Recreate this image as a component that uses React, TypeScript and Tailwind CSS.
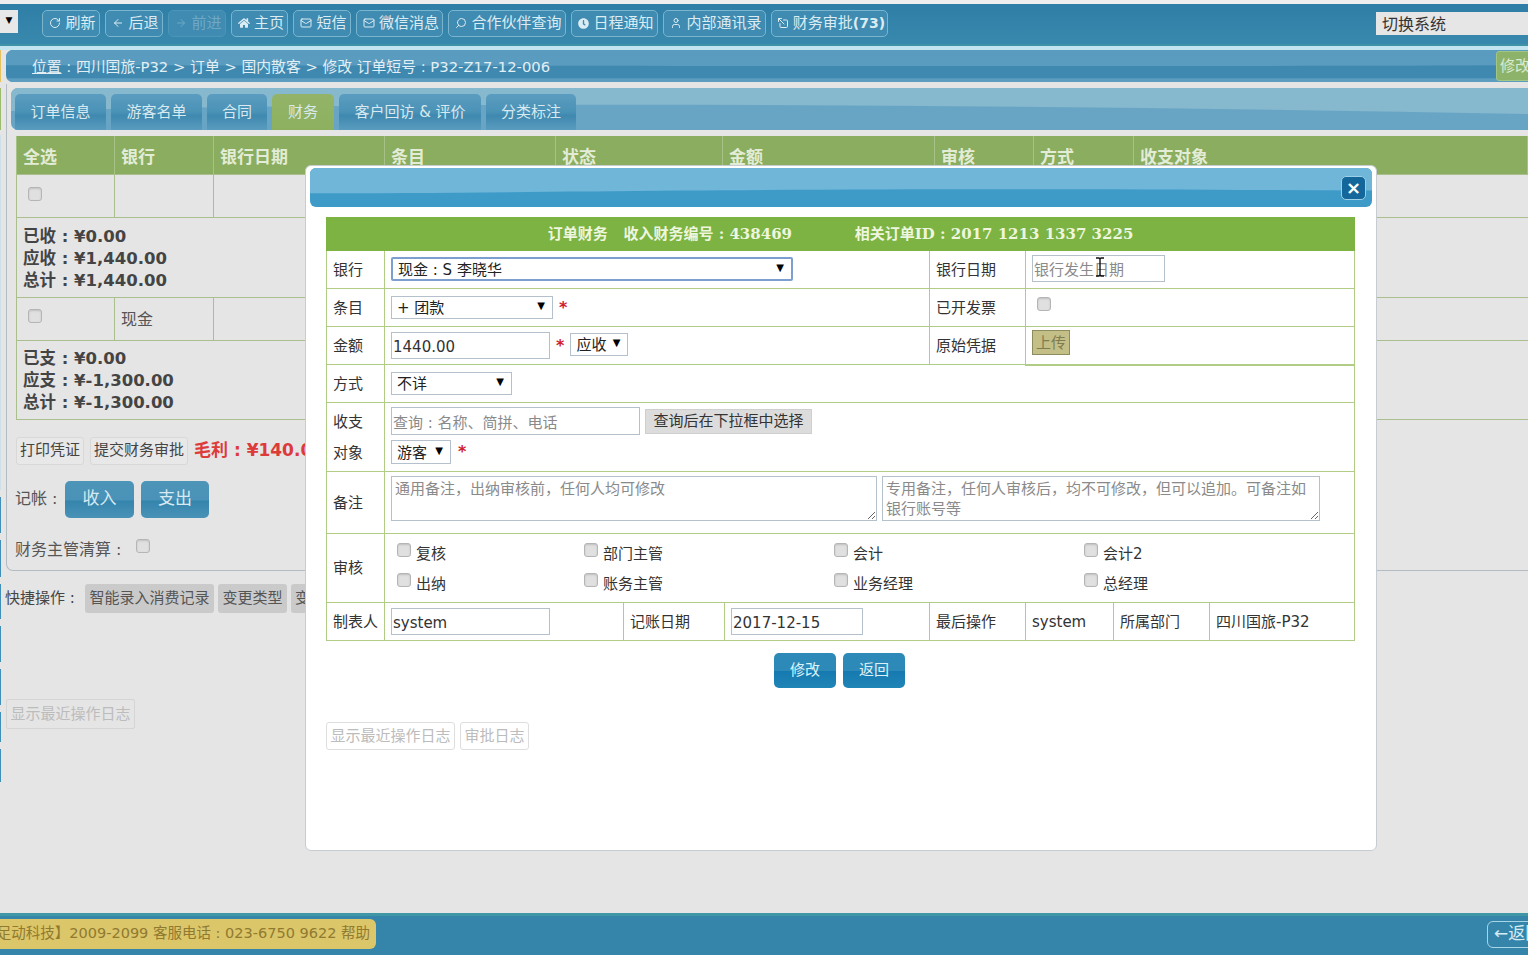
import type { ReactNode } from "react";
import { ArrowLeft, ArrowRight, Mail, RotateCw, Search, User, ExternalLink } from "lucide-react";
import { FaClock, FaHome } from "react-icons/fa";

const sans = "[font-family:'DejaVu_Sans','Noto_Sans_CJK_SC',sans-serif]";

const topButtons = [
  { label: "刷新", w: "w-[58px]", icon: <RotateCw size={12} /> },
  { label: "后退", w: "w-[58px]", icon: <ArrowLeft size={12} /> },
  { label: "前进", w: "w-[58px]", icon: <ArrowRight size={12} />, off: true },
  { label: "主页", w: "w-[57px]", icon: <FaHome size={12} /> },
  { label: "短信", w: "w-[58px]", icon: <Mail size={12} /> },
  { label: "微信消息", w: "w-[87px]", icon: <Mail size={12} /> },
  { label: "合作伙伴查询", w: "w-[118px]", icon: <Search size={12} className="-scale-x-100" /> },
  { label: "日程通知", w: "w-[87px]", icon: <FaClock size={11} /> },
  { label: "内部通讯录", w: "w-[103px]", icon: <User size={12} /> },
  { label: "财务审批", count: "(73)", w: "w-[117px]", icon: <ExternalLink size={12} className="-scale-x-100" /> },
];

const tabs = [
  { label: "订单信息", w: "w-[91px]" },
  { label: "游客名单", w: "w-[91px]" },
  { label: "合同", w: "w-[60px]" },
  { label: "财务", w: "w-[62px]", on: true },
  { label: "客户回访 & 评价", w: "w-[142px]" },
  { label: "分类标注", w: "w-[90px]" },
];

const backCols = [98, 99, 171, 171, 167, 212, 99, 100, 394];
const backHead = ["全选", "银行", "银行日期", "条目", "状态", "金额", "审核", "方式", "收支对象"];

function Wave({ fill, d }: { fill: string; d: string }) {
  return (
    <svg viewBox="0 0 1000 100" preserveAspectRatio="none" className="absolute inset-0 h-full w-full">
      <path d={d} fill={fill} />
    </svg>
  );
}

function Check({ className = "" }: { className?: string }) {
  return (
    <input
      type="checkbox"
      readOnly
      className={`h-[14px] w-[14px] appearance-none rounded-[3px] border border-[#b5b5b5] bg-[#e0e0e0] shadow-[inset_0_1px_2px_#c0c0c0] ${className}`}
    />
  );
}

function Sel({ text, className, focus }: { text: string; className: string; focus?: boolean }) {
  return (
    <div
      className={`flex items-center justify-between pl-[5px] pr-[7px] text-[15px] text-[#222] ${
        focus ? "rounded-[2px] border-2 border-[#7d9fd0]" : "border border-[#b4c0cc]"
      } ${className}`}
    >
      <span className="translate-y-[1px]">{text}</span>
      <span className="-mt-[4px] text-[10px] text-black">▼</span>
    </div>
  );
}

function Text({ className, value, placeholder }: { className: string; value?: string; placeholder?: string }) {
  return (
    <input
      readOnly
      value={value}
      placeholder={placeholder}
      className={`border border-[#b4c0cc] px-[1px] pt-[3px] text-[15px] text-[#333] outline-none placeholder:text-[#8a8a8a] ${className}`}
    />
  );
}

function Star() {
  return <span className="text-[16px] font-bold text-[#d0202c]">*</span>;
}

function Lb({ children, colSpan }: { children: ReactNode; colSpan?: number }) {
  return (
    <td colSpan={colSpan} className="border border-[#b0cc85] pl-[6px] pt-[1px] text-[15px] text-[#333]">
      {children}
    </td>
  );
}

function Cell({ children, colSpan, className = "" }: { children?: ReactNode; colSpan?: number; className?: string }) {
  return (
    <td colSpan={colSpan} className={`border border-[#b0cc85] pl-[6px] ${className}`}>
      <div className="flex items-center">{children}</div>
    </td>
  );
}

function Audit({ label }: { label: string }) {
  return (
    <label className="flex items-center gap-[5px] text-[15px] text-[#333]">
      <Check className="-mt-[6px]" />
      <span className="translate-y-[1px]">{label}</span>
    </label>
  );
}

function Modal() {
  return (
    <div className={`absolute left-[305px] top-[165px] h-[686px] w-[1072px] rounded-[6px] border border-[#c5ccd2] bg-white px-[4px] pt-[2px] ${sans}`}>
      <div className="relative flex h-[39px] items-center justify-end overflow-hidden rounded-[6px] bg-[#3e9bc8] pr-[6px]">
        <Wave fill="#70b6d9" d="M0 0H1000V58C800 55 600 52 350 58C200 62 100 65 0 65Z" />
        <button className="relative flex h-[24px] w-[25px] items-center justify-center rounded-[5px] border border-[#9cd0e6] bg-[#14679a] text-[18px] font-bold leading-none text-white">
          ×
        </button>
      </div>

      <table className="ml-[16px] mt-[10px] w-[1028px] table-fixed border-collapse">
        <colgroup>
          {[58, 239, 101, 205, 96, 88, 96, 145].map((w, i) => (
            <col key={i} style={{ width: w }} />
          ))}
        </colgroup>
        <tbody>
          <tr className="h-[33px]">
            <td colSpan={8} className="border border-[#7cb342] bg-[#7cb342] text-center [font-family:'DejaVu_Serif','Noto_Sans_CJK_SC',serif] text-[15px] font-bold text-[#eef6df]">
              订单财务&nbsp;&nbsp;&nbsp;收入财务编号 : 438469&nbsp;&nbsp;&nbsp;&nbsp;&nbsp;&nbsp;&nbsp;&nbsp;&nbsp;&nbsp;&nbsp;&nbsp;相关订单ID : 2017 1213 1337 3225
            </td>
          </tr>
          <tr className="h-[38px]">
            <Lb>银行</Lb>
            <Cell colSpan={3}>
              <Sel text="现金 : S 李晓华" focus className="-mt-[1px] h-[24px] w-[402px]" />
            </Cell>
            <Lb>银行日期</Lb>
            <Cell colSpan={3}>
              <Text placeholder="银行发生日期" className="-mt-[2px] h-[27px] w-[133px]" />
            </Cell>
          </tr>
          <tr className="h-[38px]">
            <Lb>条目</Lb>
            <Cell colSpan={3}>
              <Sel text="+ 团款" className="-mt-[1px] h-[23px] w-[162px]" />
              <span className="ml-[6px]">
                <Star />
              </span>
            </Cell>
            <Lb>已开发票</Lb>
            <Cell colSpan={3}>
              <Check className="-mt-[7px] ml-[5px]" />
            </Cell>
          </tr>
          <tr className="h-[38px]">
            <Lb>金额</Lb>
            <Cell colSpan={3}>
              <Text value="1440.00" className="-mt-[1px] h-[27px] w-[159px]" />
              <span className="ml-[6px]">
                <Star />
              </span>
              <Sel text="应收" className="ml-[6px] h-[23px] w-[58px] -translate-y-[1px]" />
            </Cell>
            <Lb>原始凭据</Lb>
            <Cell colSpan={3} className="border-b-2">
              <button className="-mt-[5px] h-[25px] w-[38px] border border-[#8d8c5e] bg-[#c4bf87] text-[15px] text-[#7f7c50]">上传</button>
            </Cell>
          </tr>
          <tr className="h-[38px]">
            <Lb>方式</Lb>
            <Cell colSpan={7}>
              <Sel text="不详" className="-mt-[1px] h-[23px] w-[121px]" />
            </Cell>
          </tr>
          <tr className="h-[69px]">
            <td className="border border-[#b0cc85] pl-[6px] pt-[1px] text-[15px] leading-[31px] text-[#333]">
              收支
              <br />
              对象
            </td>
            <td colSpan={7} className="border border-[#b0cc85] pl-[6px]">
              <div className="flex -translate-y-[2px] items-center gap-[5px]">
                <Text placeholder="查询 : 名称、简拼、电话" className="h-[28px] w-[249px]" />
                <button className="h-[25px] w-[167px] border border-[#cfcfcf] bg-[#dcdcdc] text-[15px] text-[#333]">查询后在下拉框中选择</button>
              </div>
              <div className="mt-[4px] flex -translate-y-[1px] items-center gap-[6px]">
                <Sel text="游客" className="h-[24px] w-[60px]" />
                <span className="ml-[1px]">
                  <Star />
                </span>
              </div>
            </td>
          </tr>
          <tr className="h-[62px]">
            <Lb>备注</Lb>
            <td colSpan={7} className="border border-[#b0cc85] pl-[6px]">
              <div className="flex gap-[5px] pb-[8px]">
                <textarea
                  readOnly
                  placeholder="通用备注，出纳审核前，任何人均可修改"
                  className="h-[45px] w-[486px] border border-[#b4c0cc] px-[3px] py-[2px] text-[15px] leading-[20px] outline-none placeholder:text-[#8a8a8a]"
                />
                <textarea
                  readOnly
                  placeholder="专用备注，任何人审核后，均不可修改，但可以追加。可备注如银行账号等"
                  className="h-[45px] w-[438px] border border-[#b4c0cc] px-[3px] py-[2px] text-[15px] leading-[20px] outline-none placeholder:text-[#8a8a8a]"
                />
              </div>
            </td>
          </tr>
          <tr className="h-[69px]">
            <Lb>审核</Lb>
            <td colSpan={7} className="border border-[#b0cc85] pl-[12px]">
              <div className="grid grid-cols-[187px_250px_250px_1fr] gap-y-[8px]">
                {["复核", "部门主管", "会计", "会计2", "出纳", "账务主管", "业务经理", "总经理"].map((t) => (
                  <Audit key={t} label={t} />
                ))}
              </div>
            </td>
          </tr>
          <tr className="h-[38px]">
            <Lb>制表人</Lb>
            <Cell>
              <Text value="system" className="-mt-[1px] h-[27px] w-[159px]" />
            </Cell>
            <Lb>记账日期</Lb>
            <Cell>
              <Text value="2017-12-15" className="-mt-[1px] h-[27px] w-[132px]" />
            </Cell>
            <Lb>最后操作</Lb>
            <Lb>system</Lb>
            <Lb>所属部门</Lb>
            <Lb>四川国旅-P32</Lb>
          </tr>
        </tbody>
      </table>

      <div className="ml-[464px] mt-[12px] flex gap-[7px]">
        {["修改", "返回"].map((t) => (
          <button
            key={t}
            className="h-[35px] w-[62px] rounded-[5px] bg-[linear-gradient(#2d8ab8_0%,#2d8ab8_50%,#167ab0_52%,#1f84b6_100%)] text-[15px] text-[#dff1f8]"
          >
            {t}
          </button>
        ))}
      </div>

      <div className="ml-[16px] mt-[34px] flex gap-[5px]">
        <button className="h-[28px] w-[129px] rounded-[3px] border border-[#dedede] text-[15px] text-[#bcbcbc]">显示最近操作日志</button>
        <button className="h-[28px] w-[69px] rounded-[3px] border border-[#dedede] text-[15px] text-[#bcbcbc]">审批日志</button>
      </div>

      {/* text cursor over the date input */}
      <svg viewBox="0 0 10 20" className="absolute left-[789px] top-[91px] h-[20px] w-[10px]">
        <path d="M1 1h3l1 1 1-1h3M5 2v16M1 19h3l1-1 1 1h3" fill="none" stroke="#111" strokeWidth="1.4" />
      </svg>
    </div>
  );
}

export default function App() {
  return (
    <div className={`relative h-[955px] w-[1528px] overflow-hidden bg-[#e5e5e5] text-[#444] ${sans}`}>
      <div className="h-[4px] bg-[#eeeeee]" />
      <div className="flex h-[40px] items-center bg-[linear-gradient(#2f7ea7,#3988ad)]">
        <div className="flex h-[23px] w-[18px] -translate-y-[3px] items-center justify-center bg-[#e8e8e8] text-[9px] text-black">▼</div>
        <div className="ml-[24px] flex -translate-y-[1px] gap-[5px]">
          {topButtons.map((b) => (
            <button
              key={b.label}
              className={`flex h-[27px] items-center justify-center gap-[4px] rounded-[5px] border bg-[#3f8bb1] pl-[3px] text-[15px] ${b.w} ${
                b.off ? "border-[#4b95b8] text-[#6fa9c6]" : "border-[#79b5cf] text-[#dcecf3]"
              }`}
            >
              {b.icon}
              <span className="whitespace-nowrap">
                {b.label}
                {b.count && <b className="text-[14px]">{b.count}</b>}
              </span>
            </button>
          ))}
        </div>
        <div className="ml-auto h-[23px] w-[152px] -translate-y-[1px] bg-[#e6e6e6] pl-[6px] text-[16px] leading-[25px] text-[#333]">切换系统</div>
      </div>
      <div className="h-[6px] bg-[linear-gradient(#3e93a9_30%,#c2e5ef_30%)]" />

      <div className="flex h-[863px]">
        <div className="flex w-[2px] flex-col">
          <div className="h-[32px] bg-[#e4c25e]" />
          <div className="mt-[6px] h-[42px] bg-[#9dbb6c]" />
          <div className="mt-[5px] h-[355px] bg-[#cfdfe7]" />
          {[36, 37, 35, 36, 36, 30, 33].map((h, i) => (
            <div key={i} style={{ height: h }} className="mt-[7px] bg-[#3f8fb8]" />
          ))}
        </div>

        <div className="ml-[5px] flex-1">
          <div className="relative flex h-[32px] items-center overflow-hidden rounded-l-[7px] bg-[#3f88af]">
            <Wave fill="#5a9cbf" d="M0 0H1000V48C800 52 600 50 0 48Z" />
            <Wave fill="#5d9dc0" d="M0 88H1000V100H0Z" />
            <div className="relative pl-[26px] pt-[2px] text-[14.8px] text-[#e2eff5]">
              <span className="underline">位置</span> : 四川国旅-P32 &gt; 订单 &gt; 国内散客 &gt; 修改 订单短号 : P32-Z17-12-006
            </div>
            <button className="relative ml-auto mr-[-12px] h-[30px] w-[44px] rounded-[3px] border border-[#a3c685] bg-[#8db36a] pl-[3px] text-left text-[15px] text-[#dcead0]">修改</button>
          </div>

          <div className="mt-[2px] h-[487px] rounded-bl-[7px] border-b border-l border-[#b3bcc3] pl-[4px] pt-[4px]">
            <div className="relative flex h-[42px] items-end gap-[5px] overflow-hidden rounded-l-[7px] bg-[#68a5c4] pl-[4px]">
              <Wave fill="#86b8ce" d="M0 0H1000V62C800 48 600 40 400 40C250 40 120 45 0 55Z" />
              {tabs.map((t) => (
                <div
                  key={t.label}
                  className={`relative flex h-[36px] items-center justify-center rounded-t-[5px] text-[15px] text-[#d8e9f0] ${t.w} ${
                    t.on
                      ? "bg-[linear-gradient(#93b468,#8db05f)] text-[#cfe0b8]"
                      : "bg-[linear-gradient(#5b9dc0_0%,#4a92b7_50%,#3f88af_60%,#5a9cbf_100%)]"
                  }`}
                >
                  {t.label}
                </div>
              ))}
            </div>

            <table className="ml-[5px] mt-[6px] w-[1511px] table-fixed border-collapse">
              <colgroup>
                {backCols.map((w, i) => (
                  <col key={i} style={{ width: w }} />
                ))}
              </colgroup>
              <tbody>
                <tr className="h-[38px] bg-[#8aad5f]">
                  {backHead.map((h) => (
                    <td key={h} className="border-x border-[#a6c287] pl-[6px] pt-[5px] text-[17px] font-bold text-[#e3ecd6]">
                      {h}
                    </td>
                  ))}
                </tr>
                <tr className="h-[43px]">
                  <td className="border border-[#a9c08e] pl-[11px]">
                    <Check className="-mt-[4px] block" />
                  </td>
                  {backCols.slice(1).map((w, i) => (
                    <td key={i} className="border-y border-l border-[#a9c08e]" />
                  ))}
                </tr>
                <tr className="h-[80px]">
                  <td colSpan={9} className="border-y border-l border-[#a9c08e] pl-[6px] pt-[3px] text-[16.5px] font-bold leading-[22px] text-[#444]">
                    已收 : ¥0.00
                    <br />
                    应收 : ¥1,440.00
                    <br />
                    总计 : ¥1,440.00
                  </td>
                </tr>
                <tr className="h-[43px]">
                  <td className="border border-[#a9c08e] pl-[11px]">
                    <Check className="-mt-[6px] block" />
                  </td>
                  <td className="border border-[#a9c08e] pl-[6px] pt-[2px] text-[16px] text-[#555]">现金</td>
                  {backCols.slice(2).map((w, i) => (
                    <td key={i} className="border-y border-l border-[#a9c08e]" />
                  ))}
                </tr>
                <tr className="h-[79px]">
                  <td colSpan={9} className="border-y border-l border-[#a9c08e] pl-[6px] pt-[2px] text-[16.5px] font-bold leading-[22px] text-[#444]">
                    已支 : ¥0.00
                    <br />
                    应支 : ¥-1,300.00
                    <br />
                    总计 : ¥-1,300.00
                  </td>
                </tr>
              </tbody>
            </table>

            <div className="ml-[5px] mt-[17px] flex items-center gap-[6px]">
              <button className="h-[28px] w-[68px] rounded-[3px] border border-[#d8d8d8] bg-[#e8e8e8] text-[15px] text-[#444]">打印凭证</button>
              <button className="h-[28px] w-[98px] rounded-[3px] border border-[#d8d8d8] bg-[#e8e8e8] text-[15px] text-[#444]">提交财务审批</button>
              <span className="whitespace-nowrap text-[17px] font-bold text-[#dd3a3a]">毛利 : ¥140.00</span>
            </div>

            <div className="ml-[4px] mt-[16px] flex items-center">
              <span className="w-[50px] whitespace-nowrap text-[16px] text-[#555]">记帐 :</span>
              <button className="h-[37px] w-[69px] rounded-[5px] bg-[linear-gradient(#4c94b8_0%,#4a92b7_50%,#3585ad_55%,#4a92b7_100%)] text-[17px] text-[#d8eaf2]">收入</button>
              <button className="ml-[7px] h-[37px] w-[68px] rounded-[5px] bg-[linear-gradient(#4c94b8_0%,#4a92b7_50%,#3585ad_55%,#4a92b7_100%)] text-[17px] text-[#d8eaf2]">支出</button>
            </div>

            <div className="ml-[4px] mt-[20px] flex items-center gap-[1px]">
              <span className="whitespace-nowrap text-[16px] text-[#555]">财务主管清算 :</span>
              <Check className="-mt-[7px] ml-[14px]" />
            </div>
          </div>

          <div className="-ml-[1px] mt-[13px] flex items-center gap-[4px]">
            <span className="w-[76px] whitespace-nowrap text-[15px] text-[#444]">快捷操作 :</span>
            <button className="h-[29px] w-[129px] rounded-[3px] bg-[#cacaca] text-[15px] text-[#555]">智能录入消费记录</button>
            <button className="h-[29px] w-[69px] rounded-[3px] bg-[#cacaca] text-[15px] text-[#555]">变更类型</button>
            <button className="h-[29px] w-[69px] rounded-[3px] bg-[#cacaca] pl-[4px] text-left text-[15px] text-[#555]">变更</button>
          </div>

          <button className="mt-[86px] block h-[30px] w-[129px] rounded-[2px] border border-[#d5d5d5] text-[15px] text-[#bcbcbc]">显示最近操作日志</button>
        </div>
      </div>

      <div className="flex h-[42px] items-center justify-between border-t-[3px] border-[#3f97a6] bg-[#3585ab] pb-[3px]">
        <div className="flex h-[30px] w-[376px] items-center justify-end overflow-hidden whitespace-nowrap rounded-r-[6px] bg-[#dcc66a] pr-[6px] text-[14.5px] text-[#8f7a30]">
          足动科技】2009-2099 客服电话 : 023-6750 9622 帮助
        </div>
        <div className="-mr-[14px] flex h-[27px] w-[55px] items-center overflow-hidden whitespace-nowrap rounded-l-[6px] border border-[#a9d6e6] pl-[6px] text-[17px] text-[#d6ecf4]">←返回</div>
      </div>

      <Modal />
    </div>
  );
}
